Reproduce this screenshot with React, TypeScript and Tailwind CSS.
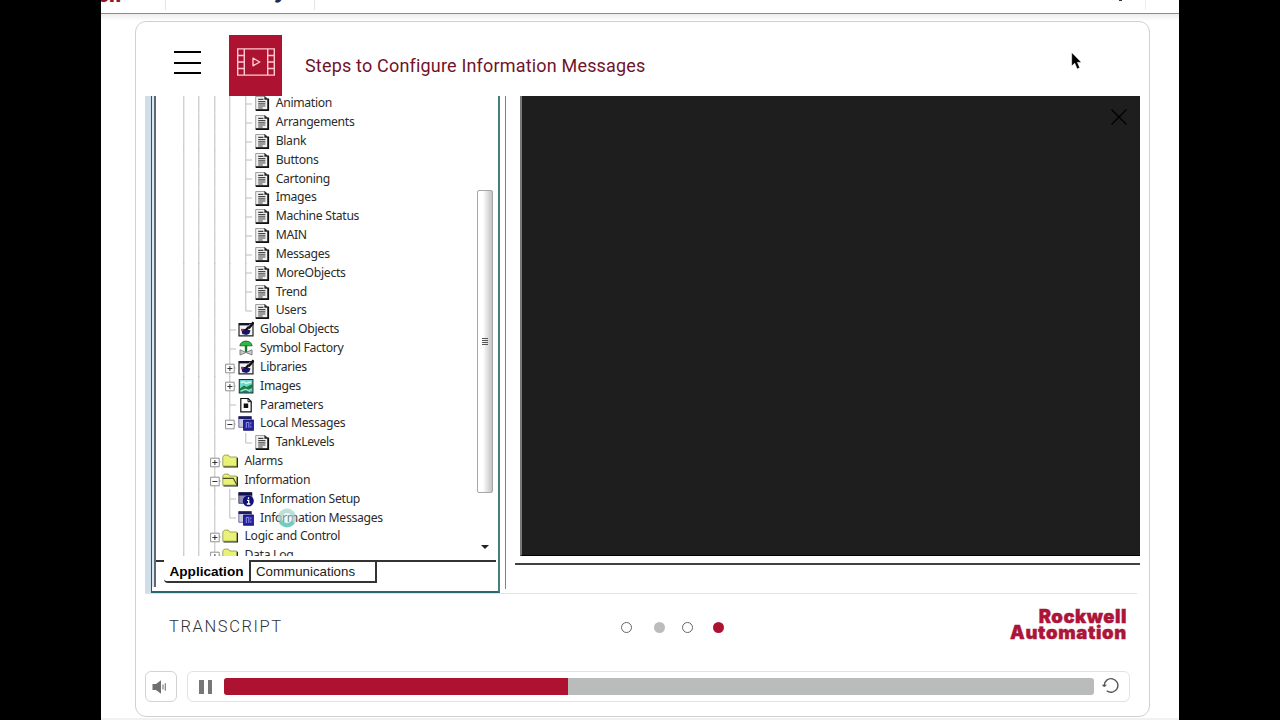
import type { ReactNode } from 'react'

type Guide = 'line' | 'tee' | 'end' | 'none'
type IconName =
  | 'page' | 'global' | 'symbol' | 'image' | 'param' | 'messages' | 'info' | 'folder' | 'folderOpen'

interface TreeRow {
  label: string
  icon: IconName
  guides: Guide[]
  box?: 'plus' | 'minus'
}

const L3: Guide[] = ['line', 'line', 'line', 'line', 'tee']
const L2: Guide[] = ['line', 'line', 'line', 'tee']
const L1: Guide[] = ['line', 'line', 'tee']

const ROWS: TreeRow[] = [
  { label: 'Animation', icon: 'page', guides: L3 },
  { label: 'Arrangements', icon: 'page', guides: L3 },
  { label: 'Blank', icon: 'page', guides: L3 },
  { label: 'Buttons', icon: 'page', guides: L3 },
  { label: 'Cartoning', icon: 'page', guides: L3 },
  { label: 'Images', icon: 'page', guides: L3 },
  { label: 'Machine Status', icon: 'page', guides: L3 },
  { label: 'MAIN', icon: 'page', guides: L3 },
  { label: 'Messages', icon: 'page', guides: L3 },
  { label: 'MoreObjects', icon: 'page', guides: L3 },
  { label: 'Trend', icon: 'page', guides: L3 },
  { label: 'Users', icon: 'page', guides: ['line', 'line', 'line', 'line', 'end'] },
  { label: 'Global Objects', icon: 'global', guides: L2 },
  { label: 'Symbol Factory', icon: 'symbol', guides: L2 },
  { label: 'Libraries', icon: 'global', guides: L2, box: 'plus' },
  { label: 'Images', icon: 'image', guides: L2, box: 'plus' },
  { label: 'Parameters', icon: 'param', guides: L2 },
  { label: 'Local Messages', icon: 'messages', guides: ['line', 'line', 'line', 'end'], box: 'minus' },
  { label: 'TankLevels', icon: 'page', guides: ['line', 'line', 'line', 'none', 'end'] },
  { label: 'Alarms', icon: 'folder', guides: L1, box: 'plus' },
  { label: 'Information', icon: 'folderOpen', guides: L1, box: 'minus' },
  { label: 'Information Setup', icon: 'info', guides: L2 },
  { label: 'Information Messages', icon: 'messages', guides: ['line', 'line', 'line', 'end'] },
  { label: 'Logic and Control', icon: 'folder', guides: L1, box: 'plus' },
  { label: 'Data Log', icon: 'folder', guides: L1, box: 'plus' },
]

const ICONS: Record<IconName, ReactNode> = {
  page: (
    <>
      <path d="M1.7 1.5h9.3l3 3v10.3H1.7z" fill="#f0f0f0" stroke="#888" strokeWidth="0.8" />
      <path d="M14.2 3.5v11.6H1.7" fill="none" stroke="#111" strokeWidth="1.8" />
      <path d="M10.4 1v3.8h4.2z" fill="#222" />
      <path d="M4.2 4.4h5.2M4.2 6.6h7.2M4.2 8.8h7.2M4.2 11h7.2M4.2 13h4.5" stroke="#444" strokeWidth="1.2" />
    </>
  ),
  global: (
    <>
      <path d="M1 2.5h14v12.3H1z" fill="#f4f4f4" stroke="#222" strokeWidth="1.2" />
      <path d="M1 3.2h10.5" stroke="#11113a" strokeWidth="2.4" />
      <path d="M3.2 8h5.5l3.8 1.6-1.2 3.2-3 1.2-4-1z" fill="#15156e" />
      <path d="M3 7.8h2.4v2H3z" fill="#b93742" />
      <path d="M7.5 9.2l2.7-2.7 2 .3" fill="none" stroke="#111" strokeWidth="2.2" />
      <path d="M11.6 6.2l4-5" fill="none" stroke="#111" strokeWidth="2.6" />
    </>
  ),
  symbol: (
    <>
      <path d="M1.8 5.8C2.4 2.6 5 1.1 8 1.1s5.6 1.5 6.2 4.7z" fill="#2fb848" stroke="#155f24" strokeWidth="0.8" />
      <path d="M8 5.5V12" stroke="#177a2b" strokeWidth="2.4" />
      <path d="M2 9.8l6 2.7 6-2.7v5.2l-6-2.5L2 15z" fill="#ccc" stroke="#777" strokeWidth="0.9" />
    </>
  ),
  image: (
    <>
      <path d="M1.3 1.5h13.6v13.4H1.3z" fill="#6fd6cc" stroke="#163b3a" strokeWidth="1.1" />
      <path d="M2 10.5l4-3 2.5 1.5 5.8-3V10l-4 1.5 4 2.5H2z" fill="#1f7a3c" />
      <path d="M3 5c1.5-2 3.5-1 4.5 0s3.5-1.5 5.5-.5" fill="none" stroke="#e4fdf8" strokeWidth="1.4" />
      <path d="M2.5 13.3l5-2 5 2.2" fill="none" stroke="#8be9e0" strokeWidth="1.5" />
    </>
  ),
  param: (
    <>
      <path d="M2.8 1.5h7.4l3 3v10.3H2.8z" fill="#fff" stroke="#111" strokeWidth="1.2" />
      <path d="M10 1.5v3.2h3.2" fill="none" stroke="#111" />
      <path d="M5.7 6.5h4.5v4.5H5.7z" fill="#111" />
    </>
  ),
  messages: (
    <>
      <path d="M.8 1.5h12.5v10.8H.8z" fill="#c9c9e4" stroke="#55558f" strokeWidth="0.8" />
      <path d="M.5 2.7h13" stroke="#1c1c60" strokeWidth="2.6" />
      <path d="M5.5 5h10.2v10.3H5.5z" fill="#2424a0" stroke="#101060" strokeWidth="0.8" />
      <path d="M8.3 13V7.5h2.5v5.3M12.8 7.3v2M12.8 10.7v2" fill="none" stroke="#9c9cec" strokeWidth="0.9" />
    </>
  ),
  info: (
    <>
      <path d="M.8 1.5h13v10.8H.8z" fill="#8f8fb4" stroke="#333360" strokeWidth="0.8" />
      <path d="M.5 3h13.6" stroke="#11114c" strokeWidth="3" />
      <circle cx="10.3" cy="10" r="5.5" fill="#11117c" />
      <path d="M10.5 6.3v1.6M9 9.3h1.7v3.7M8.8 13h3.5" fill="none" stroke="#fff" strokeWidth="1.3" />
    </>
  ),
  folder: (
    <>
      <path d="M1.5 13.8h14V4.7" fill="none" stroke="#222" strokeWidth="1.6" />
      <path d="M.8 4l1.5-1.9h4L7.7 4h6.9v9.2H.8z" fill="#e9f277" stroke="#8b8f45" strokeWidth="0.8" />
    </>
  ),
  folderOpen: (
    <>
      <path d="M1.5 13.8h14V4.7" fill="none" stroke="#222" strokeWidth="1.6" />
      <path d="M.8 4l1.5-1.9h4L7.7 4h6.9v9.2H.8z" fill="#e9f277" stroke="#8b8f45" strokeWidth="0.8" />
      <path d="M.8 6.3h10.5l3.8 7" fill="none" stroke="#4b4e21" strokeWidth="1.2" />
    </>
  ),
}

function GuideCell({ kind, box }: { kind: Guide; box?: 'plus' | 'minus' }) {
  return (
    <svg className="h-[18.83px] w-[15.6px] shrink-0 overflow-visible" fill="none" stroke="#bdbdc1" strokeWidth="1">
      {(kind === 'line' || kind === 'tee') && <path d="M7.8 0V18.83" />}
      {kind === 'end' && <path d="M7.8 0V10" />}
      {(kind === 'tee' || kind === 'end') && <path d="M7.8 10H14" />}
      {box && (
        <>
          <path d="M3.6 6.2h8.6v8.6H3.6z" fill="#fff" stroke="#909094" />
          <path d={box === 'plus' ? 'M5.4 10.5h5M7.9 8v5' : 'M5.4 10.5h5'} stroke="#333" />
        </>
      )}
    </svg>
  )
}

function Tree() {
  return (
    <div className="-mt-[2px] pl-[19.7px]">
      {ROWS.map((row, i) => (
        <div key={i} className="flex h-[18.83px] items-center">
          {row.guides.map((g, n) => (
            <GuideCell key={n} kind={g} box={n === row.guides.length - 1 ? row.box : undefined} />
          ))}
          <svg viewBox="0 0 16 16" className="h-4 w-4 shrink-0">
            {ICONS[row.icon]}
          </svg>
          <span className="ml-[6px] font-['Noto_Sans','Open_Sans',sans-serif] text-[12.2px] leading-none tracking-[-0.3px] whitespace-nowrap text-[#2b2b2b]">
            {row.label}
          </span>
        </div>
      ))}
    </div>
  )
}

function ExplorerPane() {
  return (
    <div className="relative flex h-[497px] w-[355px] shrink-0">
      <div className="w-[6px] bg-[#cfdfe9]" />
      <div className="flex flex-1 border-r-2 border-b-2 border-l border-r-[#467f80] border-b-[#28686c] border-l-[#34506a] bg-white">
        <div className="mb-1 w-[4px] border-r-2 border-[#5a6a7a] bg-[#dde8ee]" />
        <div className="flex flex-1 flex-col">
          <div className="flex h-[460px] overflow-hidden">
            <div className="flex-1 overflow-hidden">
              <Tree />
            </div>
            <div className="mr-[5px] flex w-4 flex-col items-center pt-[94px]">
              <div className="flex h-[303px] w-4 flex-col items-center justify-center gap-px rounded-[2px] border border-[#a9a6a8] bg-linear-to-r from-white from-35% to-[#c4c2c4]">
                <div className="h-px w-[6px] bg-[#555]" />
                <div className="h-px w-[6px] bg-[#555]" />
                <div className="h-px w-[6px] bg-[#555]" />
                <div className="h-px w-[6px] bg-[#555]" />
              </div>
              <svg viewBox="0 0 8 4" className="mt-[52px] h-1 w-2">
                <path d="M0 0h8L4 4z" fill="#222" />
              </svg>
            </div>
          </div>
          {/* Tabs under the tree */}
          <div className="mt-1 flex h-[23px] font-['Liberation_Sans',Arial,sans-serif] text-[13.3px]">
            <div className="w-[8px] border-t-2 border-[#333]" />
            <div className="flex w-[87px] items-center justify-center rounded-bl-[4px] border-r-2 border-b-2 border-[#333] pt-[3px] text-[13.6px] font-bold text-black">
              Application
            </div>
            <div className="flex w-[126px] items-center border-t-2 border-r-2 border-b-2 border-[#333] pl-[5px] text-[#222]">
              Communications
            </div>
            <div className="mr-[2px] flex-1 border-t-2 border-[#333]" />
          </div>
        </div>
      </div>
      {/* Busy pointer hovering the tree */}
      <svg viewBox="0 0 20 20" className="absolute top-[412px] left-[132px] h-5 w-5">
        <circle cx="10" cy="10" r="7.2" fill="#d8f4ee" fillOpacity="0.45" stroke="#9fcfc8" strokeOpacity="0.65" strokeWidth="4.5" />
        <path d="M3.8 13.6A7.2 7.2 0 0 0 16 14" fill="none" stroke="#3fbfa6" strokeOpacity="0.6" strokeWidth="4" />
      </svg>
    </div>
  )
}

function Slide() {
  return (
    <div className="relative flex h-[498px] w-[995px]">
      <ExplorerPane />
      <div className="ml-[5px] h-[493px] w-px bg-[#887f86]" />
      <div className="ml-[9px] flex-1">
        <div className="ml-[5px] h-[460px] border-b border-l-2 border-b-black border-l-[#777] bg-[#1e1e1e]" />
        <div className="mt-[7px] h-[2px] bg-[#444144]" />
      </div>
      <svg viewBox="0 0 16 16" className="absolute top-[13px] right-[13px] h-4 w-4" stroke="#000" strokeWidth="1.4">
        <path d="M.5.5l15 15M15.5.5l-15 15" />
      </svg>
      <div className="absolute right-[3px] bottom-0 left-0 h-px bg-[#e2e2e6]" />
    </div>
  )
}

function Header() {
  return (
    <header className="flex h-[74px] items-end">
      <div className="mb-[22px] ml-[29px] flex w-[27px] flex-col gap-[8.5px]">
        <div className="h-[2px] bg-black" />
        <div className="h-[2px] bg-black" />
        <div className="h-[2px] bg-black" />
      </div>
      <div className="ml-[28px] flex h-[61px] w-[53px] justify-center bg-[#ad1331] pt-[13px]">
        <svg viewBox="0 0 38 28" className="h-7 w-[38px]" fill="none" stroke="#ffc9d3" strokeWidth="1.4">
          <path d="M.7.9h36.6v26.2H.7zM7.3.9v26.2M30.7.9v26.2M.7 7.5h6.6M.7 14h6.6M.7 20.5h6.6M30.7 7.5h6.6M30.7 14h6.6M30.7 20.5h6.6" />
          <path d="M16 10.2v7.6l6.8-3.8z" strokeLinejoin="round" />
        </svg>
      </div>
      <h1 className="mb-[17px] ml-[23px] font-[Roboto,sans-serif] text-[18px] leading-[26px] tracking-[0.18px] whitespace-nowrap text-[#70142a]">
        Steps to Configure Information Messages
      </h1>
    </header>
  )
}

function Footer() {
  return (
    <div className="flex h-[77px] items-center pr-[22px] pl-[24px]">
      <div className="-mt-[11px] w-[452px] font-[Roboto,sans-serif] text-[16.5px] font-light tracking-[1.6px] text-[#333]">
        TRANSCRIPT
      </div>
      <div className="-mt-[11px] flex items-center">
        <div className="h-[11px] w-[11px] rounded-full border border-[#666]" />
        <div className="ml-[22px] h-[11px] w-[11px] rounded-full bg-[#bcbcbc]" />
        <div className="ml-[17px] h-[11px] w-[11px] rounded-full border border-[#666]" />
        <div className="ml-[20px] h-[11px] w-[11px] rounded-full bg-[#ad1331]" />
      </div>
      <div className="-mt-[16px] ml-auto flex flex-col items-end font-[Inter,sans-serif] text-[18.5px] leading-[15.5px] font-black text-[#ad1439]">
        <div className="tracking-[0.5px] [-webkit-text-stroke:0.4px_#ad1439]">Rockwell</div>
        <div className="tracking-[0.65px] [-webkit-text-stroke:0.4px_#ad1439]">Automation</div>
      </div>
    </div>
  )
}

function Player() {
  return (
    <div className="flex gap-[10px]">
      <div className="flex h-[31px] w-8 items-center justify-center rounded-[6px] border border-[#d2d2d2]">
        <svg viewBox="0 0 15 14" className="mr-[3px] h-[14px] w-[15px]">
          <path d="M.5 4H4l5-3.8v13.6L4 10H.5z" fill="#6f6f6f" />
          <path d="M11 4.5v5M13.3 3.2v7.6" stroke="#777" strokeWidth="1.1" />
        </svg>
      </div>
      <div className="flex h-[31px] w-[943px] items-center rounded-[6px] border border-[#e2e2e2]">
        <div className="ml-[11px] flex gap-[4px]">
          <div className="h-[14px] w-[4.5px] bg-[#777]" />
          <div className="h-[14px] w-[4.5px] bg-[#777]" />
        </div>
        <div className="ml-[12px] h-[17px] w-[870px] overflow-hidden rounded-[3px] bg-[#babcbc]">
          <div className="h-full w-[344px] bg-[#ad1331]" />
        </div>
        <svg viewBox="0 0 18 18" className="-mt-[2px] ml-[8px] h-[17px] w-[17px]" fill="none" stroke="#555" strokeWidth="1.5">
          <path d="M2.4 9A7.2 7.2 0 1 1 5 14.5" />
          <path d="M.4 8.4h4.2L2.4 10.6z" fill="#555" strokeWidth="0.6" />
        </svg>
      </div>
    </div>
  )
}

export default function App() {
  return (
    <div className="h-[720px] w-[1280px] overflow-hidden bg-black">
      <div className="relative mx-auto h-[720px] w-[1078px] overflow-hidden bg-white">
        {/* Bottom edge of the site navigation bar */}
        <div className="flex h-[14px] overflow-hidden border-b border-[#8b8b8b] font-[Inter,sans-serif] text-[18px] leading-[18px] font-black">
          <div className="h-[10px] w-[65px] border-r border-[#e4e4e4]">
            <div className="-mt-[13px] -ml-[3px] text-[#98112f]">on</div>
          </div>
          <div className="h-[10px] w-[149px] border-r border-[#e4e4e4]">
            <div className="-mt-[16px] ml-[108px] text-[18px] text-[#252a4a]">y</div>
          </div>
          <div className="h-[10px] w-[831px] border-r border-[#eee]">
            <div className="ml-[804px] h-px w-[3px] bg-[#333]" />
          </div>
        </div>
        <div className="h-[7px] bg-linear-to-b from-[#ededed] to-white" />
        <div className="ml-[34px] h-[696px] w-[1015px] rounded-[11px] border border-[#d0d0d0] pl-[9px]">
          <Header />
          <Slide />
          <Footer />
          <Player />
        </div>
        <div className="mt-px h-[2px] bg-[#f1f1f1]" />
        <svg viewBox="0 0 12 18" className="absolute top-[52px] left-[970px] h-[18px] w-3">
          <path d="M.8.8v13l3-2.8 2.4 5.8 2.4-1-2.4-5.6h4z" fill="#000" stroke="#fff" strokeWidth="0.3" />
        </svg>
      </div>
    </div>
  )
}
